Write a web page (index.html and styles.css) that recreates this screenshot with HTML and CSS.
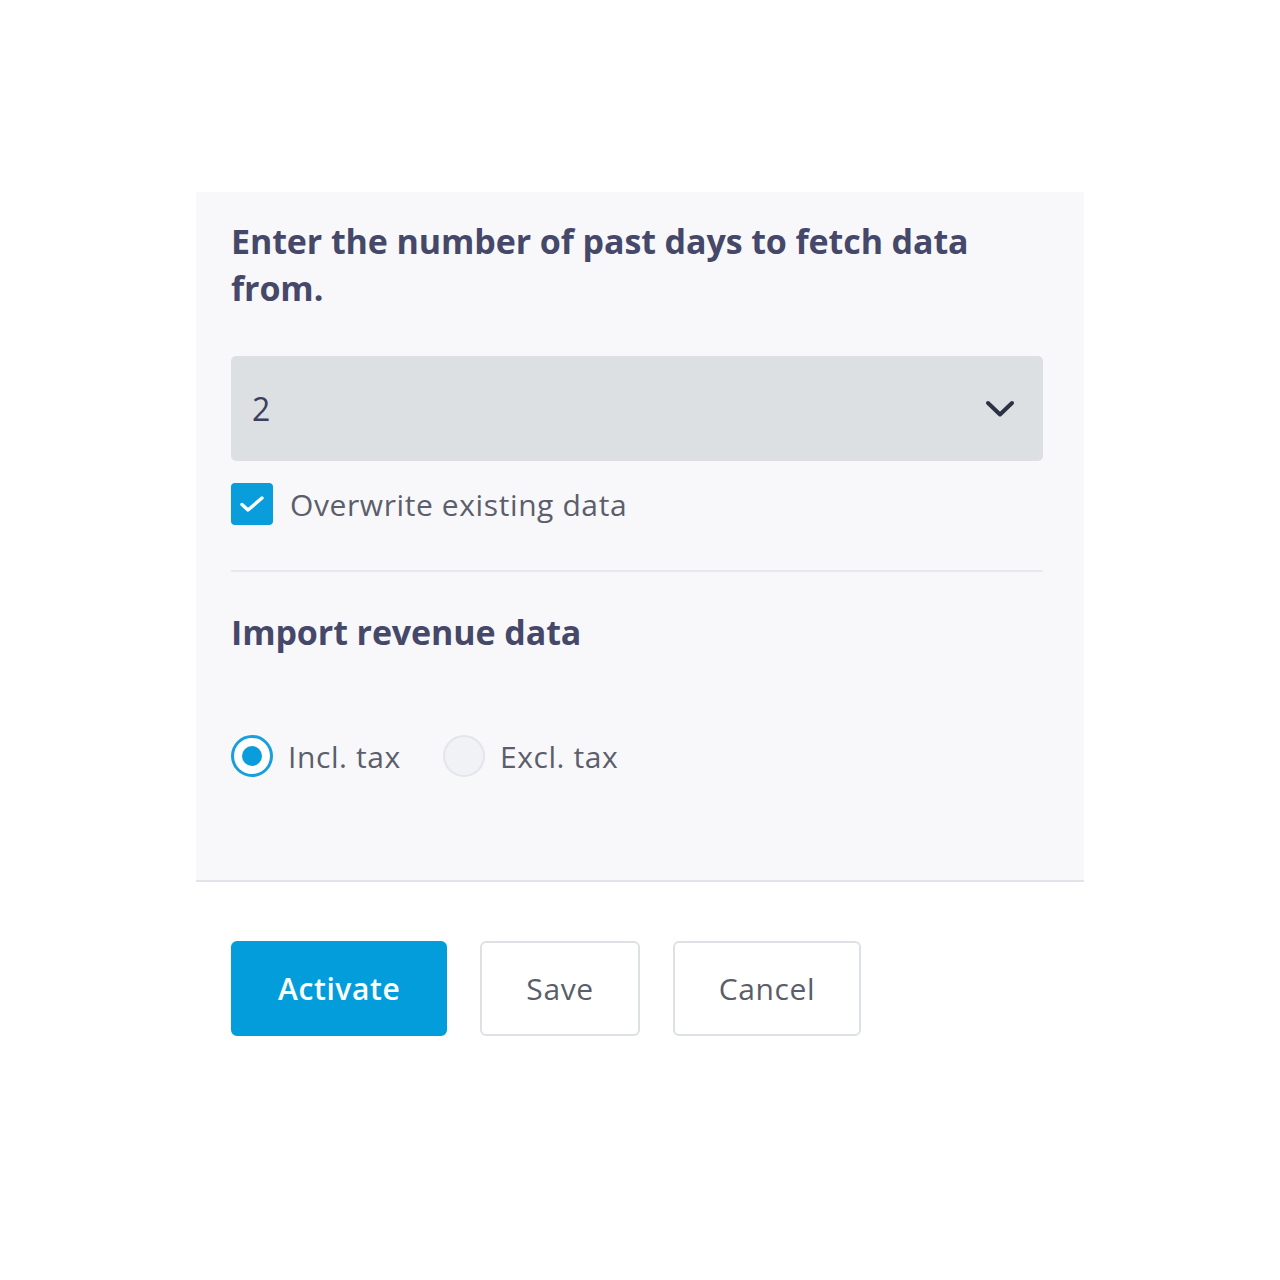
FILE: index.html
```html
<!DOCTYPE html>
<html>
<head>
<meta charset="utf-8">
<link rel="stylesheet" href="styles.css">
</head>
<body>
<div class="panel">
  <h2 class="title">Enter the number of past days to fetch data from.</h2>
  <div class="select">
    <span class="select-value">2</span>
    <svg class="chevron" width="32" height="18" viewBox="0 0 32 18"><polyline points="4,3 16,14.5 28,3" fill="none" stroke="#2c3144" stroke-width="4" stroke-linecap="round" stroke-linejoin="round"/></svg>
  </div>
  <label class="check-row">
    <span class="checkbox"><svg width="26" height="18" viewBox="0 0 26 18"><polyline points="3,9.5 9,15 23,3" fill="none" stroke="#fff" stroke-width="3.4" stroke-linecap="round" stroke-linejoin="round"/></svg></span>
    <span class="check-label">Overwrite existing data</span>
  </label>
  <div class="divider"></div>
  <h2 class="title section">Import revenue data</h2>
  <div class="radios">
    <label class="radio-item"><span class="radio on"><span class="dot"></span></span><span class="radio-label">Incl. tax</span></label>
    <label class="radio-item"><span class="radio"></span><span class="radio-label">Excl. tax</span></label>
  </div>
</div>
<div class="actions">
  <button class="btn primary">Activate</button>
  <button class="btn">Save</button>
  <button class="btn">Cancel</button>
</div>
</body>
</html>
```
FILE: styles.css
```css
body {
  margin: 0;
  background: #ffffff;
  font-family: "Open Sans", Lato, sans-serif;
}
.panel {
  margin: 192px 0 0 196px;
  width: 888px;
  box-sizing: border-box;
  padding: 26px 41px 103px 35px;
  background: #f8f8fa;
  border-bottom: 2px solid #e3e4ea;
}
.title {
  margin: 0;
  font-size: 34px;
  line-height: 47px;
  font-weight: 700;
  color: #454869;
  letter-spacing: -0.1px;
}
.title.section {
  margin-top: 37px;
}
.select {
  margin-top: 44px;
  height: 105px;
  background: #dce0e3;
  border-radius: 5px;
  display: flex;
  align-items: center;
  justify-content: space-between;
  padding: 0 27px 0 21px;
}
.select-value {
  font-size: 32px;
  color: #3a3f5e;
}
.chevron {
  display: block;
}
.check-row {
  margin-top: 22px;
  display: flex;
  align-items: center;
  gap: 17px;
}
.checkbox {
  width: 42px;
  height: 42px;
  border-radius: 4px;
  background: #0a9ddb;
  display: flex;
  align-items: center;
  justify-content: center;
}
.checkbox svg { display: block; }
.check-label, .radio-label {
  font-size: 30px;
  color: #5c5e6b;
  letter-spacing: 0.6px;
}
.divider {
  margin-top: 45px;
  height: 2px;
  background: #e8e8ed;
}
.radios {
  margin-top: 79px;
  display: flex;
  gap: 42px;
}
.radio-item {
  display: flex;
  align-items: center;
  gap: 15px;
}
.radio {
  width: 42px;
  height: 42px;
  box-sizing: border-box;
  border-radius: 50%;
  border: 2px solid #e3e5ea;
  background: #f1f2f5;
  display: flex;
  align-items: center;
  justify-content: center;
}
.radio.on {
  border: 3px solid #1b9fdc;
  background: #ffffff;
}
.dot {
  width: 20px;
  height: 20px;
  border-radius: 50%;
  background: #0a9ddb;
}
.actions {
  margin: 59px 0 0 231px;
  display: flex;
  gap: 33px;
}
.btn {
  height: 95px;
  padding: 0 44px;
  font-family: "Open Sans", Lato, sans-serif;
  font-size: 30px;
  color: #5a5e6a;
  background: #ffffff;
  border: 2px solid #dde1e6;
  border-radius: 6px;
  letter-spacing: 0.6px;
}
.btn.primary {
  background: #049ddb;
  border-color: #049ddb;
  color: #ffffff;
  font-weight: 600;
  padding: 0 45px;
}
```
